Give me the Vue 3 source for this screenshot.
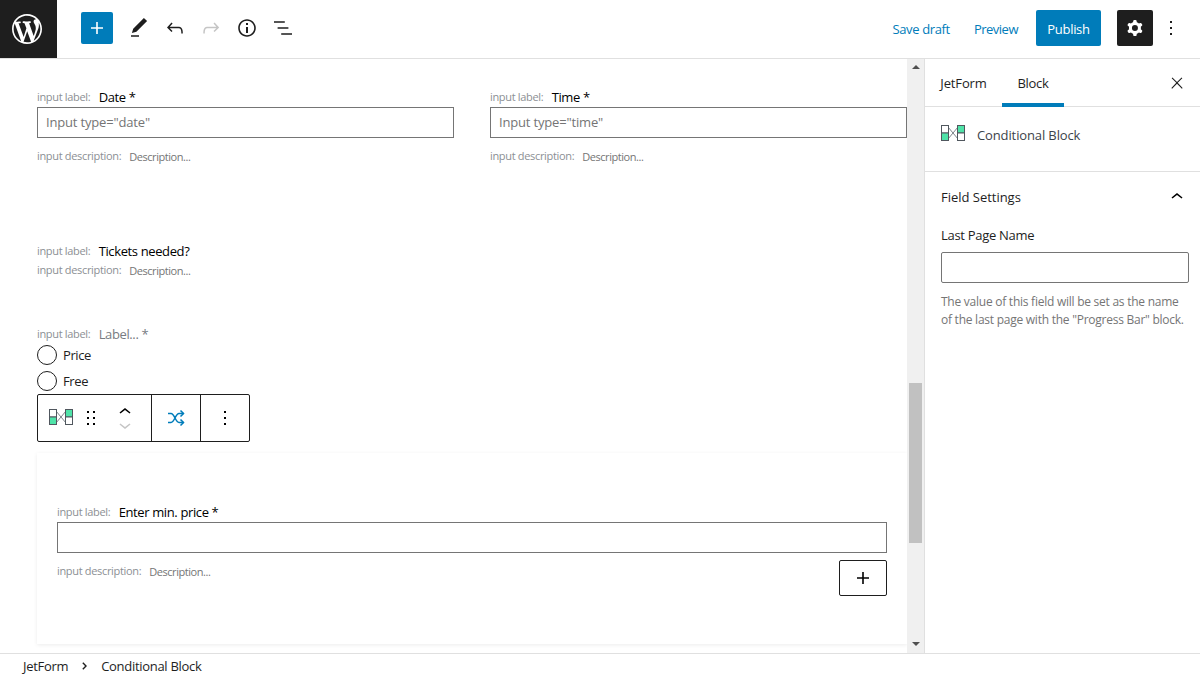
<script setup>
const icons = {
    plus: 'M18 11.2h-5.2V6h-1.6v5.2H6v1.6h5.2V18h1.6v-5.2H18z',
    pencil: 'M20.1 5.1L16.9 2 6.2 12.7l-1.3 4.4 4.5-1.3L20.1 5.1zM4 20.8h8v-1.5H4v1.5z',
    undo: 'M18.3 11.7c-.6-.6-1.4-.9-2.3-.9H6.7l2.9-3.3-1.1-1-4.5 5L8.5 16l1-1-2.7-2.7H16c.5 0 .9.2 1.3.5 1 1 1 3.4 1 4.5v.3h1.5v-.2c0-1.5 0-4.3-1.5-5.7z',
    redo: 'M15.6 6.5l-1.1 1 2.9 3.3H8c-.9 0-1.7.3-2.3.9-1.4 1.5-1.4 4.2-1.4 5.6v.2h1.5v-.3c0-1.1 0-3.5 1-4.5.3-.3.7-.5 1.3-.5h9.2L14.5 15l1.1 1.1 4.6-4.6-4.6-5z',
    info: 'M12 3.2c-4.8 0-8.8 3.9-8.8 8.8 0 4.8 3.9 8.8 8.8 8.8 4.8 0 8.8-3.9 8.8-8.8 0-4.8-4-8.8-8.8-8.8zm0 16c-4 0-7.2-3.3-7.2-7.2C4.8 8 8 4.8 12 4.8s7.2 3.3 7.2 7.2c0 4-3.2 7.2-7.2 7.2zM11 17h2v-6h-2v6zm0-8h2V7h-2v2z',
    list: 'M13.8 5.2H3v1.5h10.8V5.2zm-3.6 12v1.5H21v-1.5H10.2zm7.2-6H6.6v1.5h10.8v-1.5z',
    cog: 'M10.289 4.836A1 1 0 0111.275 4h1.306a1 1 0 01.987.836l.244 1.466c.787.26 1.503.679 2.108 1.218l1.393-.522a1 1 0 011.216.437l.653 1.13a1 1 0 01-.23 1.273l-1.148.944a6.025 6.025 0 010 2.435l1.149.946a1 1 0 01.23 1.272l-.653 1.13a1 1 0 01-1.216.437l-1.394-.522c-.605.54-1.32.958-2.108 1.218l-.244 1.466a1 1 0 01-.987.836h-1.306a1 1 0 01-.986-.836l-.244-1.466a5.995 5.995 0 01-2.108-1.218l-1.394.522a1 1 0 01-1.217-.436l-.653-1.131a1 1 0 01.23-1.272l1.149-.946a6.026 6.026 0 010-2.435l-1.148-.944a1 1 0 01-.23-1.272l.653-1.131a1 1 0 011.217-.437l1.393.522a5.994 5.994 0 012.108-1.218l.244-1.466zM14.929 12a3 3 0 11-6 0 3 3 0 016 0z',
    more: 'M13 19h-2v-2h2v2zm0-6h-2v-2h2v2zm0-6h-2V5h2v2z',
    close: 'M13 11.8l6.1-6.3-1-1-6.1 6.2-6.1-6.2-1 1 6.1 6.3-6.5 6.7 1 1 6.5-6.6 6.5 6.6 1-1z',
    chevronUp: 'M6.5 12.4L12 8l5.5 4.4-.9 1.2L12 10l-4.5 3.6-1-1.2z',
    chevronDown: 'M17.5 11.6L12 16l-5.5-4.4.9-1.2L12 14l4.5-3.6 1 1.2z',
    drag: 'M8 7h2V5H8v2zm0 6h2v-2H8v2zm0 6h2v-2H8v2zm6-14v2h2V5h-2zm0 8h2v-2h-2v2zm0 6h2v-2h-2v2z',
}
const wpLogo = 'M20 10c0-5.51-4.49-10-10-10C4.48 0 0 4.49 0 10c0 5.52 4.48 10 10 10 5.51 0 10-4.48 10-10zM7.78 15.37L4.37 6.22c.55-.02 1.17-.08 1.17-.08.5-.06.44-1.13-.06-1.11 0 0-1.45.11-2.37.11-.18 0-.37 0-.58-.01C4.12 2.69 6.87 1.11 10 1.11c2.33 0 4.45.87 6.05 2.34-.68-.11-1.65.39-1.65 1.58 0 .74.45 1.36.9 2.1.35.61.55 1.36.55 2.46 0 1.49-1.4 5-1.4 5l-3.03-8.37c.54-.02.82-.17.82-.17.5-.05.44-1.25-.06-1.22 0 0-1.44.12-2.38.12-.87 0-2.33-.12-2.33-.12-.5-.03-.56 1.2-.06 1.22l.92.08 1.26 3.41zM17.41 10c.24-.64.74-1.87.43-4.25.7 1.29 1.05 2.71 1.05 4.25 0 3.29-1.73 6.24-4.4 7.78.97-2.59 1.94-5.2 2.92-7.78zM6.1 18.09C3.12 16.65 1.11 13.53 1.11 10c0-1.3.23-2.48.72-3.59C3.25 10.3 4.67 14.2 6.1 18.09zm4.03-6.63l2.58 6.98c-.86.29-1.76.45-2.71.45-.79 0-1.57-.11-2.29-.33.81-2.38 1.62-4.74 2.42-7.1z'
</script>

<template>
    <div class="page">
        <header class="topbar">
            <div class="logo">
                <svg width="30" height="30" viewBox="0 0 20 20"><path :d="wpLogo" fill="#fff" /></svg>
            </div>
            <div class="tools">
                <button class="add"><svg width="24" height="24" viewBox="0 0 24 24"><path :d="icons.plus" fill="#fff" /></svg></button>
                <svg class="tool" width="24" height="24" viewBox="0 0 24 24"><path :d="icons.pencil" /></svg>
                <svg class="tool" width="24" height="24" viewBox="0 0 24 24"><path :d="icons.undo" /></svg>
                <svg class="tool disabled" width="24" height="24" viewBox="0 0 24 24"><path :d="icons.redo" /></svg>
                <svg class="tool" width="24" height="24" viewBox="0 0 24 24"><path :d="icons.info" /></svg>
                <svg class="tool" width="24" height="24" viewBox="0 0 24 24"><path :d="icons.list" /></svg>
            </div>
            <div class="actions">
                <a class="link">Save draft</a>
                <a class="link preview">Preview</a>
                <button class="publish">Publish</button>
                <button class="settings">
                    <svg width="24" height="24" viewBox="0 0 24 24"><path :d="icons.cog" fill="#fff" fill-rule="evenodd" /></svg>
                </button>
                <svg class="tool" width="24" height="24" viewBox="0 0 24 24"><path :d="icons.more" /></svg>
            </div>
        </header>

        <div class="body">
            <main class="editor">
                <div class="content">
                    <div class="columns">
                        <div class="field">
                            <div class="label-row"><span class="hint">input label:</span><span class="label">Date *</span></div>
                            <div class="input placeholder">Input type="date"</div>
                            <div class="desc-row"><span class="hint">input description:</span><span class="desc">Description...</span></div>
                        </div>
                        <div class="field">
                            <div class="label-row"><span class="hint">input label:</span><span class="label">Time *</span></div>
                            <div class="input placeholder">Input type="time"</div>
                            <div class="desc-row"><span class="hint">input description:</span><span class="desc">Description...</span></div>
                        </div>
                    </div>

                    <div class="tickets">
                        <div class="label-row"><span class="hint">input label:</span><span class="label">Tickets needed?</span></div>
                        <div class="desc-row tight"><span class="hint">input description:</span><span class="desc">Description...</span></div>
                    </div>

                    <div class="radios">
                        <div class="label-row"><span class="hint">input label:</span><span class="label muted">Label... *</span></div>
                        <div class="radio"><i></i>Price</div>
                        <div class="radio"><i></i>Free</div>
                    </div>

                    <div class="block-toolbar">
                        <div class="group first">
                            <svg class="cond" width="24" height="16" viewBox="0 0 24 16">
                                <path d="M7 2L17 14M7 14L17 2" fill="none" stroke="#7d848a" />
                                <rect x=".5" y=".5" width="7" height="7.5" fill="#fff" stroke="#50575e" />
                                <rect x=".5" y="8" width="7" height="7.5" fill="#4fe3a8" stroke="#50575e" />
                                <rect x="16.5" y=".5" width="7" height="7.5" fill="#4fe3a8" stroke="#50575e" />
                                <rect x="16.5" y="8" width="7" height="7.5" fill="#fff" stroke="#50575e" />
                            </svg>
                            <svg class="drag" width="24" height="24" viewBox="0 0 24 24"><path :d="icons.drag" /></svg>
                            <div class="movers">
                                <svg width="24" height="16" viewBox="0 4 24 16"><path :d="icons.chevronUp" /></svg>
                                <svg class="disabled" width="24" height="16" viewBox="0 4 24 16"><path :d="icons.chevronDown" /></svg>
                            </div>
                        </div>
                        <div class="group shuffle">
                            <svg width="24" height="24" viewBox="0 0 24 24" fill="none" stroke="#007cba" stroke-width="1.5">
                                <path d="M4 7.5h3c3.5 0 4.5 9 8 9h4.5M4 16.5h3c3.5 0 4.5-9 8-9h4.5" />
                                <path d="M16.5 4.5l3 3-3 3M16.5 13.5l3 3-3 3" />
                            </svg>
                        </div>
                        <div class="group more">
                            <svg width="24" height="24" viewBox="0 0 24 24"><path :d="icons.more" /></svg>
                        </div>
                    </div>

                    <section class="cond-block">
                        <div class="label-row"><span class="hint">input label:</span><span class="label">Enter min. price *</span></div>
                        <div class="input"></div>
                        <div class="desc-row inner"><span class="hint">input description:</span><span class="desc">Description...</span></div>
                        <button class="appender">
                            <svg width="24" height="24" viewBox="0 0 24 24"><path :d="icons.plus" /></svg>
                        </button>
                    </section>
                </div>
                <div class="scrollbar">
                    <span class="arrow up"></span>
                    <div class="track"><div class="thumb"></div></div>
                    <span class="arrow down"></span>
                </div>
            </main>

            <aside class="sidebar">
                <div class="tabs">
                    <span class="tab first-tab">JetForm</span>
                    <span class="tab active">Block</span>
                    <svg class="close" width="18" height="18" viewBox="0 0 24 24"><path :d="icons.close" /></svg>
                </div>
                <div class="block-card">
                    <svg width="24" height="16" viewBox="0 0 24 16">
                        <path d="M7 2L17 14M7 14L17 2" fill="none" stroke="#7d848a" />
                        <rect x=".5" y=".5" width="7" height="7.5" fill="#fff" stroke="#50575e" />
                        <rect x=".5" y="8" width="7" height="7.5" fill="#4fe3a8" stroke="#50575e" />
                        <rect x="16.5" y=".5" width="7" height="7.5" fill="#4fe3a8" stroke="#50575e" />
                        <rect x="16.5" y="8" width="7" height="7.5" fill="#fff" stroke="#50575e" />
                    </svg>
                    <span class="card-title">Conditional Block</span>
                </div>
                <div class="panel">
                    <div class="panel-head">
                        <span>Field Settings</span>
                        <svg width="24" height="24" viewBox="0 0 24 24"><path :d="icons.chevronUp" /></svg>
                    </div>
                    <div class="panel-label">Last Page Name</div>
                    <div class="panel-input"></div>
                    <p class="panel-help">The value of this field will be set as the name of the last page with the "Progress Bar" block.</p>
                </div>
            </aside>
        </div>

        <footer class="crumbs">
            <span>JetForm</span>
            <svg width="5" height="8" viewBox="0 0 5 8"><path d="M.8.8L4 4 .8 7.2" fill="none" stroke="#1e1e1e" stroke-width="1.4" /></svg>
            <span>Conditional Block</span>
        </footer>
    </div>
</template>

<style>
body {
    margin: 0;
    background: #fff;
}
</style>

<style scoped>
.page {
    width: 1200px;
    height: 676px;
    display: flex;
    flex-direction: column;
    overflow: hidden;
    font-family: "Open Sans", "Noto Sans", sans-serif;
    font-size: 13px;
    letter-spacing: -0.3px;
    color: #1e1e1e;
}

button {
    border: 0;
    padding: 0;
    font: inherit;
    letter-spacing: inherit;
    display: flex;
    align-items: center;
    justify-content: center;
}

.topbar {
    height: 58px;
    flex: none;
    display: flex;
    align-items: center;
    border-bottom: 1px solid #e0e0e0;
}

.logo {
    width: 57px;
    height: 58px;
    box-sizing: border-box;
    padding-right: 3px;
    background: #1e1e1e;
    display: flex;
    align-items: center;
    justify-content: center;
}

.tools {
    display: flex;
    align-items: center;
    gap: 12px;
    margin: 0 0 2px 24px;
}

.add {
    width: 32px;
    height: 32px;
    background: #007cba;
    border-radius: 2px;
    margin-right: 2px;
}

.tool {
    fill: #1e1e1e;
}

.disabled {
    fill: #c5c5c5;
}

.actions {
    margin: 0 0 2px auto;
    display: flex;
    align-items: center;
    padding-right: 17px;
}

.link {
    color: #007cba;
    margin: 2px 24px 0 0;
    letter-spacing: -0.35px;
}

.link.preview {
    margin-right: 18px;
    letter-spacing: -0.5px;
}

.publish {
    width: 65px;
    height: 36px;
    padding-top: 2px;
    box-sizing: border-box;
    background: #007cba;
    color: #fff;
    border-radius: 2px;
    margin-right: 16px;
}

.settings {
    width: 36px;
    height: 36px;
    background: #1e1e1e;
    border-radius: 2px;
    margin-right: 6px;
}

.body {
    flex: 1;
    min-height: 0;
    display: flex;
}

.editor {
    flex: 1;
    min-width: 0;
    display: flex;
}

.content {
    flex: 1;
    min-width: 0;
    padding: 29px 0 0 37px;
}

.columns {
    display: flex;
    gap: 36px;
}

.field {
    flex: 1;
}

.label-row {
    display: flex;
    align-items: center;
    gap: 8.4px;
    height: 17px;
}

.hint {
    font-size: 11px;
    color: #8c8f94;
    letter-spacing: -0.33px;
    padding-bottom: 1px;
}

.label {
    color: #000;
    font-size: 13px;
    letter-spacing: -0.38px;
}

.muted {
    color: #787c82;
}

.input {
    box-sizing: border-box;
    height: 31px;
    border: 1px solid #757575;
    margin-top: 2px;
    padding: 0 8px;
    line-height: 29px;
}

.placeholder {
    color: #757575;
    letter-spacing: -0.17px;
}

.desc-row {
    display: flex;
    align-items: center;
    gap: 8px;
    height: 18px;
    margin-top: 9px;
}

.desc-row.tight {
    margin-top: 2px;
}

.desc {
    font-size: 11px;
    color: #757575;
    letter-spacing: -0.45px;
}

.tickets {
    margin-top: 77px;
}

.radios {
    margin-top: 46px;
}

.radio {
    display: flex;
    align-items: center;
    gap: 6px;
    height: 26px;
    color: #1e1e1e;
    letter-spacing: -0.38px;
}

.radio i {
    box-sizing: border-box;
    width: 20px;
    height: 20px;
    border: 1px solid #1e1e1e;
    border-radius: 50%;
}

.block-toolbar {
    width: 213px;
    height: 48px;
    box-sizing: border-box;
    border: 1px solid #1e1e1e;
    border-radius: 2px;
    display: flex;
}

.group {
    display: flex;
    align-items: center;
    justify-content: center;
    border-right: 1px solid #1e1e1e;
}

.group.first {
    width: 114px;
    padding-left: 11px;
    box-sizing: border-box;
    justify-content: flex-start;
}

.group.shuffle {
    width: 49px;
    box-sizing: border-box;
}

.group.more {
    flex: 1;
    border-right: 0;
}

.cond {
    margin-bottom: 2px;
}

.drag {
    margin-left: 6px;
}

.movers {
    margin-left: 10px;
    display: flex;
    flex-direction: column;
    justify-content: center;
}

.movers .disabled {
    margin-top: -3px;
}

.cond-block {
    box-sizing: border-box;
    height: 191px;
    margin-top: 11px;
    padding: 50px 20px 0;
    box-shadow: 0 1px 4px rgba(0, 0, 0, 0.08);
}

.appender {
    width: 48px;
    height: 36px;
    margin: -20px 0 0 auto;
    background: #fff;
    border: 1px solid #1e1e1e;
    border-radius: 2px;
    box-sizing: border-box;
}

.scrollbar {
    width: 17px;
    flex: none;
    background: #f0f0f0;
    display: flex;
    flex-direction: column;
    align-items: center;
}

.arrow {
    width: 0;
    height: 0;
    flex: none;
    border-left: 4px solid transparent;
    border-right: 4px solid transparent;
}

.arrow.up {
    margin: 6px 0 5px;
    border-bottom: 4px solid #505050;
}

.arrow.down {
    margin: 4px 0 7px;
    border-top: 4px solid #505050;
}

.track {
    flex: 1;
    width: 100%;
    padding-top: 309px;
    box-sizing: border-box;
}

.thumb {
    width: 13px;
    height: 160px;
    margin: 0 auto;
    background: #c1c1c1;
}

.sidebar {
    width: 276px;
    flex: none;
    box-sizing: border-box;
    border-left: 1px solid #e0e0e0;
}

.tabs {
    height: 48px;
    box-sizing: border-box;
    display: flex;
    align-items: flex-start;
    border-bottom: 1px solid #e0e0e0;
}

.tab {
    height: 48px;
    box-sizing: border-box;
    line-height: 48px;
    text-align: center;
    font-weight: 500;
}

.first-tab {
    width: 77px;
    letter-spacing: -0.15px;
}

.tab.active {
    width: 62px;
    border-bottom: 4px solid #007cba;
}

.close {
    margin: 15px 14px 0 auto;
    fill: #1e1e1e;
}

.block-card {
    height: 65px;
    box-sizing: border-box;
    padding: 18px 0 0 16px;
    display: flex;
    align-items: flex-start;
    gap: 12px;
    border-bottom: 1px solid #e0e0e0;
}

.card-title {
    font-weight: 500;
    line-height: 18px;
    margin-top: 1px;
    letter-spacing: -0.12px;
    color: #3c434a;
}

.panel {
    padding: 0 11px 0 16px;
}

.panel-head {
    height: 50px;
    display: flex;
    align-items: center;
    justify-content: space-between;
    font-weight: 500;
    letter-spacing: -0.02px;
    color: #1e1e1e;
}

.panel-label {
    margin-top: 4px;
    line-height: 18px;
}

.panel-input {
    box-sizing: border-box;
    width: 248px;
    height: 31px;
    margin-top: 8px;
    border: 1px solid #757575;
    border-radius: 2px;
}

.panel-help {
    margin: 10px 0 0;
    font-size: 12px;
    line-height: 18px;
    color: #757575;
    letter-spacing: -0.25px;
    width: 248px;
}

.crumbs {
    height: 23px;
    flex: none;
    box-sizing: border-box;
    border-top: 1px solid #e0e0e0;
    padding: 2px 0 0 23px;
    display: flex;
    align-items: center;
    gap: 14px;
}
</style>
